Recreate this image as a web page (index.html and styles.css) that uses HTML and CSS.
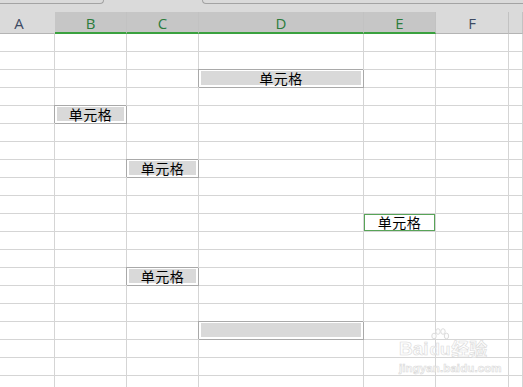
FILE: index.html
```html
<!DOCTYPE html>
<html lang="zh-CN">
<head>
    <meta charset="UTF-8">
    <title>单元格</title>
    <link rel="stylesheet" href="styles.css">
</head>
<body>
    <div class="tabs">
        <div class="seg seg-left"></div>
        <div class="seg-gap"></div>
        <div class="seg seg-right"></div>
    </div>

    <div class="head">
        <div class="hcell first"><div class="lbl">A</div></div>
        <div class="hcell sel"><div class="lbl">B</div></div>
        <div class="hcell sel"><div class="lbl">C</div></div>
        <div class="hcell sel"><div class="lbl">D</div></div>
        <div class="hcell sel"><div class="lbl">E</div></div>
        <div class="hcell"><div class="lbl">F</div></div>
        <div class="hcell"><div class="lbl"></div></div>
    </div>

    <div class="sheet">
        <div class="row"><div class="cell"></div><div class="cell"></div><div class="cell"></div><div class="cell"></div><div class="cell"></div><div class="cell"></div><div class="cell"></div></div>
        <div class="row"><div class="cell"></div><div class="cell"></div><div class="cell"></div><div class="cell"></div><div class="cell"></div><div class="cell"></div><div class="cell"></div></div>
        <div class="row"><div class="cell"></div><div class="cell"></div><div class="cell"></div><div class="cell mark"><span class="fill">单元格</span></div><div class="cell"></div><div class="cell"></div><div class="cell"></div></div>
        <div class="row"><div class="cell"></div><div class="cell"></div><div class="cell"></div><div class="cell"></div><div class="cell"></div><div class="cell"></div><div class="cell"></div></div>
        <div class="row"><div class="cell"></div><div class="cell mark"><span class="fill">单元格</span></div><div class="cell"></div><div class="cell"></div><div class="cell"></div><div class="cell"></div><div class="cell"></div></div>
        <div class="row"><div class="cell"></div><div class="cell"></div><div class="cell"></div><div class="cell"></div><div class="cell"></div><div class="cell"></div><div class="cell"></div></div>
        <div class="row"><div class="cell"></div><div class="cell"></div><div class="cell"></div><div class="cell"></div><div class="cell"></div><div class="cell"></div><div class="cell"></div></div>
        <div class="row"><div class="cell"></div><div class="cell"></div><div class="cell mark"><span class="fill">单元格</span></div><div class="cell"></div><div class="cell"></div><div class="cell"></div><div class="cell"></div></div>
        <div class="row"><div class="cell"></div><div class="cell"></div><div class="cell"></div><div class="cell"></div><div class="cell"></div><div class="cell"></div><div class="cell"></div></div>
        <div class="row"><div class="cell"></div><div class="cell"></div><div class="cell"></div><div class="cell"></div><div class="cell"></div><div class="cell"></div><div class="cell"></div></div>
        <div class="row"><div class="cell"></div><div class="cell"></div><div class="cell"></div><div class="cell"></div><div class="cell pick"><span class="box">单元格</span></div><div class="cell"></div><div class="cell"></div></div>
        <div class="row"><div class="cell"></div><div class="cell"></div><div class="cell"></div><div class="cell"></div><div class="cell"></div><div class="cell"></div><div class="cell"></div></div>
        <div class="row"><div class="cell"></div><div class="cell"></div><div class="cell"></div><div class="cell"></div><div class="cell"></div><div class="cell"></div><div class="cell"></div></div>
        <div class="row"><div class="cell"></div><div class="cell"></div><div class="cell mark"><span class="fill">单元格</span></div><div class="cell"></div><div class="cell"></div><div class="cell"></div><div class="cell"></div></div>
        <div class="row"><div class="cell"></div><div class="cell"></div><div class="cell"></div><div class="cell"></div><div class="cell"></div><div class="cell"></div><div class="cell"></div></div>
        <div class="row"><div class="cell"></div><div class="cell"></div><div class="cell"></div><div class="cell"></div><div class="cell"></div><div class="cell"></div><div class="cell"></div></div>
        <div class="row"><div class="cell"></div><div class="cell"></div><div class="cell"></div><div class="cell mark"><span class="fill"></span></div><div class="cell"></div><div class="cell"></div><div class="cell"></div></div>
        <div class="row"><div class="cell"></div><div class="cell"></div><div class="cell"></div><div class="cell"></div><div class="cell"></div><div class="cell"></div><div class="cell"></div></div>
        <div class="row"><div class="cell"></div><div class="cell"></div><div class="cell"></div><div class="cell"></div><div class="cell"></div><div class="cell"></div><div class="cell"></div></div>
        <div class="row"><div class="cell"></div><div class="cell"></div><div class="cell"></div><div class="cell"></div><div class="cell"></div><div class="cell"></div><div class="cell"></div></div>
    </div>

    <!-- watermark over the bottom right corner -->
    <div class="wm">
        <div class="wm-top">
            <span class="wm-bai">Bai</span>
            <span class="wm-du">
                <svg class="paw" width="20" height="16" viewBox="0 0 20 16">
                    <g fill="#fdfdfd" stroke="#dcdcdc" stroke-width="1">
                        <ellipse cx="4" cy="8" rx="2.2" ry="2.8"/>
                        <ellipse cx="8" cy="3.5" rx="2.2" ry="2.8"/>
                        <ellipse cx="13" cy="3.5" rx="2.2" ry="2.8"/>
                        <ellipse cx="16.5" cy="8" rx="2.2" ry="2.8"/>
                    </g>
                </svg>
                du
            </span>
            <span class="wm-jy">经验</span>
        </div>
        <div class="wm-url">jingyan.baidu.com</div>
    </div>
</body>
</html>
```

FILE: styles.css
```css
body {
    margin: 0;
    width: 523px;
    height: 387px;
    overflow: hidden;
    position: relative;
    background: #fff;
    font-family: "Noto Sans CJK SC", sans-serif;
}

.tabs {
    display: flex;
    height: 4px;
    background: #dadada;
}
.seg {
    height: 4px;
    box-sizing: border-box;
    border-bottom: 1px solid #a3a3a3;
}
.seg-left {
    width: 104px;
    border-right: 1px solid #a3a3a3;
    border-bottom-right-radius: 4px;
}
.seg-gap {
    width: 98px;
}
.seg-right {
    flex: 1;
    border-left: 1px solid #a3a3a3;
    border-bottom-left-radius: 4px;
}

.head, .row {
    display: grid;
    grid-template-columns: 55px 72px 72px 165px 72px 73px 1fr;
}
.hcell {
    height: 30px;
    padding-top: 8px;
    box-sizing: border-box;
    background: #dadada;
}
.lbl {
    height: 22px;
    box-sizing: border-box;
    border-right: 1px solid #c2c2c2;
    border-bottom: 1px solid #b4b4b4;
    display: flex;
    align-items: center;
    justify-content: center;
    font-family: "Open Sans", sans-serif;
    font-size: 15px;
    color: #3d4a63;
}
/* column A runs off the left edge, so its letter sits left of centre */
.hcell.first .lbl {
    border-right-color: #dadada;
    padding-right: 16px;
}
.hcell.sel .lbl {
    background: #c6c6c6;
    border-bottom: 2px solid #3aa13f;
    color: #2c7c3c;
    padding-top: 1px;
}

.cell {
    height: 18px;
    box-sizing: border-box;
    border-right: 1px solid #d5d5d5;
    border-bottom: 1px solid #d5d5d5;
}
.cell.mark {
    border-color: #a9a9a9;
    box-shadow: -1px -1px 0 #a9a9a9;
    padding: 1px 2px 2px 2px;
}
.fill {
    display: block;
    height: 100%;
    background: #d9d9d9;
    text-align: center;
    font-size: 14px;
    line-height: 14px;
    letter-spacing: 0.5px;
    color: #000;
}
.box {
    display: block;
    height: 100%;
    box-sizing: border-box;
    border: 1px solid #58a458;
    text-align: center;
    font-size: 14px;
    line-height: 14px;
    letter-spacing: 0.5px;
    color: #000;
}

.wm {
    position: absolute;
    left: 399px;
    top: 331px;
    width: 100px;
    font-family: "Liberation Sans", Arial, sans-serif;
    font-weight: bold;
    color: #fdfdfd;
    -webkit-text-stroke: 0.6px #dadada;
}
.wm-top {
    display: flex;
    align-items: flex-end;
    height: 27px;
}
.wm-bai {
    font-size: 19px;
    line-height: 19px;
}
.wm-du {
    display: flex;
    flex-direction: column;
    align-items: center;
    font-size: 17px;
    line-height: 17px;
    margin-left: 1px;
}
.paw {
    margin-bottom: -3px;
}
.wm-jy {
    font-family: "Noto Sans CJK SC", sans-serif;
    font-size: 18px;
    line-height: 19px;
    margin-left: 1px;
}
.wm-url {
    font-size: 11.5px;
    line-height: 14px;
    margin-top: 3px;
    letter-spacing: 0.1px;
}
```
